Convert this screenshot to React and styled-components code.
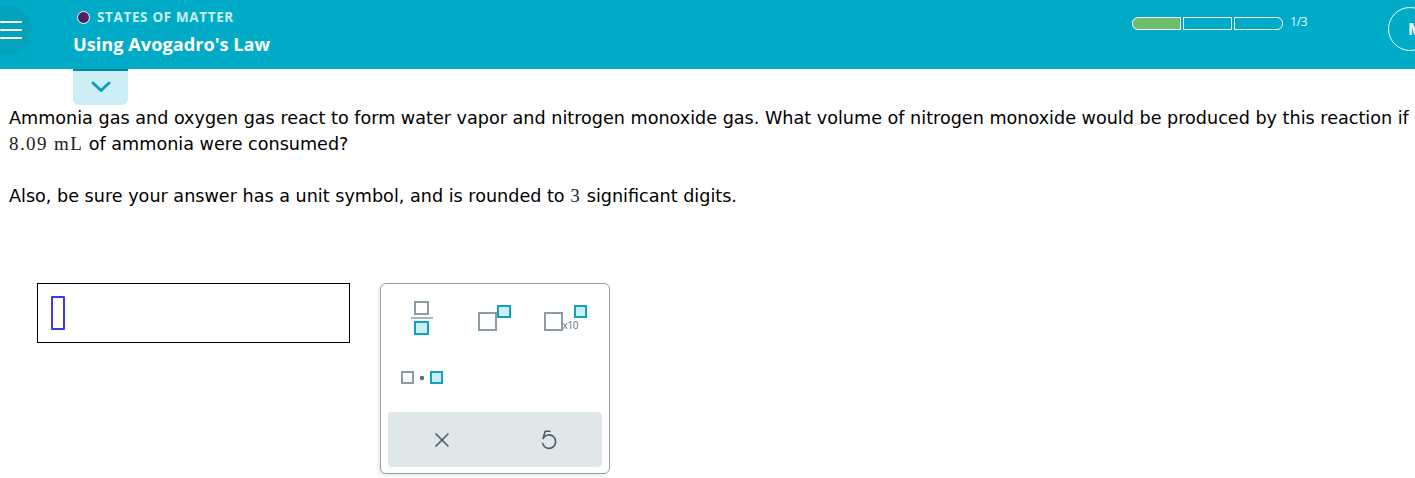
import React from 'react';
import styled, { createGlobalStyle } from 'styled-components';

const GlobalStyle = createGlobalStyle`
  html, body {
    margin: 0;
    padding: 0;
    background: #fff;
    overflow: hidden;
  }
`;

const Page = styled.div`
  width: 1415px;
  height: 478px;
  overflow: hidden;
  position: relative;
`;

const Header = styled.header`
  height: 69px;
  background: #00abc8;
  display: flex;
  align-items: flex-start;
  position: relative;
  overflow: hidden;
`;

const MenuButton = styled.div`
  position: absolute;
  left: -16px;
  top: 6px;
  width: 48px;
  height: 48px;
  border-radius: 50%;
  background: #04a2bd;
  display: flex;
  flex-direction: column;
  justify-content: center;
  gap: 6px;

  span {
    display: block;
    width: 22px;
    height: 2px;
    margin-left: 16px;
    background: #fff;
    border-radius: 1px;
  }
`;

const TitleBlock = styled.div`
  margin-left: 73px;
  padding-top: 8px;
  font-family: 'Open Sans', 'Liberation Sans', sans-serif;
  font-weight: 700;
`;

const Topic = styled.div`
  display: flex;
  align-items: center;
  gap: 7px;
  font-size: 13.4px;
  line-height: 18px;
  color: #c9eef5;
  letter-spacing: 0.7px;
  margin-left: 4px;
`;

const Dot = styled.span`
  width: 11px;
  height: 11px;
  border-radius: 50%;
  background: #4e2262;
  border: 1.5px solid #fff;
`;

const Title = styled.div`
  margin-top: 6px;
  font-size: 18.2px;
  line-height: 24px;
  color: #fff;
  letter-spacing: 0;
`;

const Progress = styled.div`
  position: absolute;
  left: 1132px;
  top: 17px;
  display: flex;
  align-items: center;
  gap: 2px;
  font-family: 'Open Sans', 'Liberation Sans', sans-serif;
`;

const Segment = styled.div`
  width: 47px;
  height: 11px;
  border: 1px solid #fff;
  background: ${p => (p.$done ? '#6cbd6c' : 'transparent')};
  border-radius: ${p => (p.$first ? '6px 0 0 6px' : p.$last ? '0 6px 6px 0' : '0')};
`;

const Count = styled.span`
  color: #e6f7fa;
  font-size: 12.5px;
  margin-left: 5px;
  margin-top: -4px;
  letter-spacing: -0.6px;
`;

const Avatar = styled.div`
  position: absolute;
  left: 1388px;
  top: 7px;
  width: 44px;
  height: 44px;
  border-radius: 50%;
  border: 1px solid #fff;
  color: #fff;
  font-family: 'Open Sans', 'Liberation Sans', sans-serif;
  font-weight: 700;
  font-size: 16px;
  display: flex;
  align-items: center;
  padding-left: 19px;
  box-sizing: border-box;
`;

const Tab = styled.div`
  margin-left: 73px;
  width: 55px;
  height: 36px;
  background: #cdeef4;
  border-top: 2px solid #0588a0;
  border-radius: 0 0 6px 6px;
  box-sizing: border-box;
  display: flex;
  justify-content: center;
  padding-top: 10px;
`;

const Body = styled.div`
  padding-left: 9px;
  font-family: 'DejaVu Sans', Verdana, sans-serif;
  font-size: 17.6px;
  color: #000;
  line-height: 26px;
`;

const Para = styled.p`
  margin: 0;
  padding-top: ${p => p.$top || 0}px;
  white-space: nowrap;
`;

const Math = styled.span`
  font-family: 'Liberation Serif', 'DejaVu Serif', serif;
  font-size: 19px;
  letter-spacing: 1.4px;
  color: #222;
`;

const AnswerRow = styled.div`
  display: flex;
  align-items: flex-start;
  gap: 30px;
  padding-left: 37px;
  padding-top: 74px;
`;

const InputBox = styled.div`
  width: 313px;
  height: 60px;
  border: 1px solid #000;
  box-sizing: border-box;
  padding: 12px 0 0 13px;
`;

const Caret = styled.div`
  width: 10px;
  height: 30px;
  border: 2px solid #3a3af5;
  border-radius: 1px;
`;

const Palette = styled.div`
  width: 230px;
  height: 191px;
  border: 1px solid #8ea1aa;
  border-radius: 6px;
  box-sizing: border-box;
  box-shadow: -2px 2px 3px rgba(0, 0, 0, 0.08);
  padding: 0 7px 6px 7px;
  display: flex;
  flex-direction: column;
`;

const KeyGrid = styled.div`
  display: grid;
  grid-template-columns: 70px 72px 72px;
  grid-template-rows: 60px 60px;
  flex: 1;
`;

const Key = styled.div`
  display: flex;
  align-items: center;
  justify-content: center;
  padding-top: ${p => p.$pt || 0}px;
`;

const ActionBar = styled.div`
  height: 55px;
  background: #e0e7e9;
  border-radius: 4px;
  display: grid;
  grid-template-columns: 1fr 1fr;
  align-items: center;
  justify-items: center;
`;

const GRAY = '#8b9ca4';
const TEAL = '#159fbd';
const TEAL_FILL = '#c9eef5';

const FractionIcon = () => (
  <svg width="26" height="36" viewBox="0 0 26 36">
    <rect x="5" y="1" width="13" height="12" fill="#fff" stroke={GRAY} strokeWidth="2" />
    <line x1="1" y1="17" x2="23" y2="17" stroke={GRAY} strokeWidth="1.5" />
    <rect x="5" y="21" width="13" height="12" fill={TEAL_FILL} stroke={TEAL} strokeWidth="2" />
  </svg>
);

const PowerIcon = () => (
  <svg width="34" height="28" viewBox="0 0 34 28">
    <rect x="2" y="8" width="17" height="17" fill="#fff" stroke={GRAY} strokeWidth="2" />
    <rect x="21" y="1" width="12" height="11" fill={TEAL_FILL} stroke={TEAL} strokeWidth="2" />
  </svg>
);

const SciIcon = () => (
  <svg width="46" height="28" viewBox="0 0 46 28">
    <rect x="2" y="8" width="17" height="17" fill="#fff" stroke={GRAY} strokeWidth="2" />
    <text x="19.5" y="24" fontFamily="'Open Sans', 'Liberation Sans', sans-serif" fontSize="10" letterSpacing="-0.3" fill="#5f7078">x10</text>
    <rect x="32" y="1" width="11" height="11" fill={TEAL_FILL} stroke={TEAL} strokeWidth="2" />
  </svg>
);

const DotIcon = () => (
  <svg width="44" height="14" viewBox="0 0 44 14">
    <rect x="1" y="1" width="11" height="11" fill="#fff" stroke={GRAY} strokeWidth="2" />
    <circle cx="21" cy="7" r="2.2" fill="#5a6d75" />
    <rect x="30" y="1" width="11" height="11" fill={TEAL_FILL} stroke={TEAL} strokeWidth="2" />
  </svg>
);

const CloseIcon = () => (
  <svg width="16" height="16" viewBox="0 0 16 16">
    <path d="M1.5 1.5 L14.5 14.5 M14.5 1.5 L1.5 14.5" stroke="#4a5e66" strokeWidth="1.6" fill="none" />
  </svg>
);

const UndoIcon = () => (
  <svg width="18" height="21" viewBox="0 0 18 21">
    <path
      d="M10 2.2 H5.2 L3 9.6 A6.7 6.7 0 1 1 2.6 14.6"
      stroke="#4a5e66"
      strokeWidth="1.6"
      fill="none"
      strokeLinecap="round"
      strokeLinejoin="round"
    />
  </svg>
);

const Chevron = () => (
  <svg width="20" height="12" viewBox="0 0 20 12">
    <path d="M2 2 L10 9.5 L18 2" stroke="#0e9fbd" strokeWidth="3" fill="none" strokeLinecap="round" strokeLinejoin="round" />
  </svg>
);

export default function App() {
  return (
    <Page>
      <GlobalStyle />
      <Header>
        <MenuButton>
          <span />
          <span />
          <span />
        </MenuButton>
        <TitleBlock>
          <Topic>
            <Dot />
            STATES OF MATTER
          </Topic>
          <Title>Using Avogadro's Law</Title>
        </TitleBlock>
        <Progress>
          <Segment $done $first />
          <Segment />
          <Segment $last />
          <Count>1/3</Count>
        </Progress>
        <Avatar>M</Avatar>
      </Header>
      <Tab>
        <Chevron />
      </Tab>
      <Body>
        <Para>
          Ammonia gas and oxygen gas react to form water vapor and nitrogen monoxide gas. What volume of nitrogen monoxide would be produced by this reaction if
        </Para>
        <Para>
          <Math>8.09&nbsp;mL</Math> of ammonia were consumed?
        </Para>
        <Para $top={26}>
          Also, be sure your answer has a unit symbol, and is rounded to <Math>3</Math> significant digits.
        </Para>
      </Body>
      <AnswerRow>
        <InputBox>
          <Caret />
        </InputBox>
        <Palette>
          <KeyGrid>
            <Key $pt={10}><FractionIcon /></Key>
            <Key $pt={10}><PowerIcon /></Key>
            <Key $pt={10}><SciIcon /></Key>
            <Key $pt={8}><DotIcon /></Key>
          </KeyGrid>
          <ActionBar>
            <CloseIcon />
            <UndoIcon />
          </ActionBar>
        </Palette>
      </AnswerRow>
    </Page>
  );
}
